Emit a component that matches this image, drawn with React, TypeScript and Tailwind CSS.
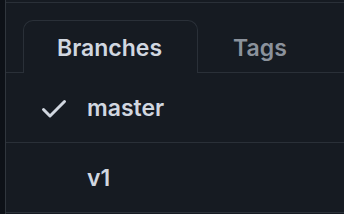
import React from 'react';

const CheckIcon: React.FC = () => (
  <svg viewBox="0 0 16 16" width="32" height="32" fill="currentColor" className="shrink-0">
    <path d="M13.78 4.22a.75.75 0 0 1 0 1.06l-7.25 7.25a.75.75 0 0 1-1.06 0L2.22 9.28a.751.751 0 0 1 .018-1.042.751.751 0 0 1 1.042-.018L6 10.94l6.72-6.72a.75.75 0 0 1 1.06 0Z" />
  </svg>
);

const refs = [
  { name: 'master', current: true },
  { name: 'v1', current: false },
];

const App: React.FC = () => {
  return (
    <div
      className="h-[214px] w-[344px] overflow-hidden bg-[#0d1117] pl-[5px]"
      style={{ fontFamily: 'Inter, "Noto Sans", sans-serif' }}
    >
      <div className="h-full border-l border-[#30363d] bg-[#161b22] pt-[2px]">
        <div className="border-t border-[#2a3038]" />
        <div className="flex border-b border-[#2a3038] pl-[17px] pt-[17px]">
          <div className="-mb-px flex h-[53px] items-center rounded-t-[10px] border border-b-0 border-[#2a3038] bg-[#161b22] pl-[33px] pr-[35px] pt-[3px] text-[23px] font-semibold text-[#d1d7e0]">
            Branches
          </div>
          <div className="-mb-px flex h-[53px] items-center border border-b-0 border-transparent px-[34px] pt-[3px] text-[23px] font-semibold text-[#8b929c]">
            Tags
          </div>
        </div>
        {refs.map((r) => (
          <div
            key={r.name}
            className="flex h-[70px] items-center border-b border-[#2a3038] pl-[32px] text-[23px] font-semibold text-[#d1d7e0]"
          >
            <span className="flex w-8 text-[#d1d7e0]">{r.current && <CheckIcon />}</span>
            <span className="ml-[17px] pt-[1px]">{r.name}</span>
          </div>
        ))}
      </div>
    </div>
  );
};

export default App;
